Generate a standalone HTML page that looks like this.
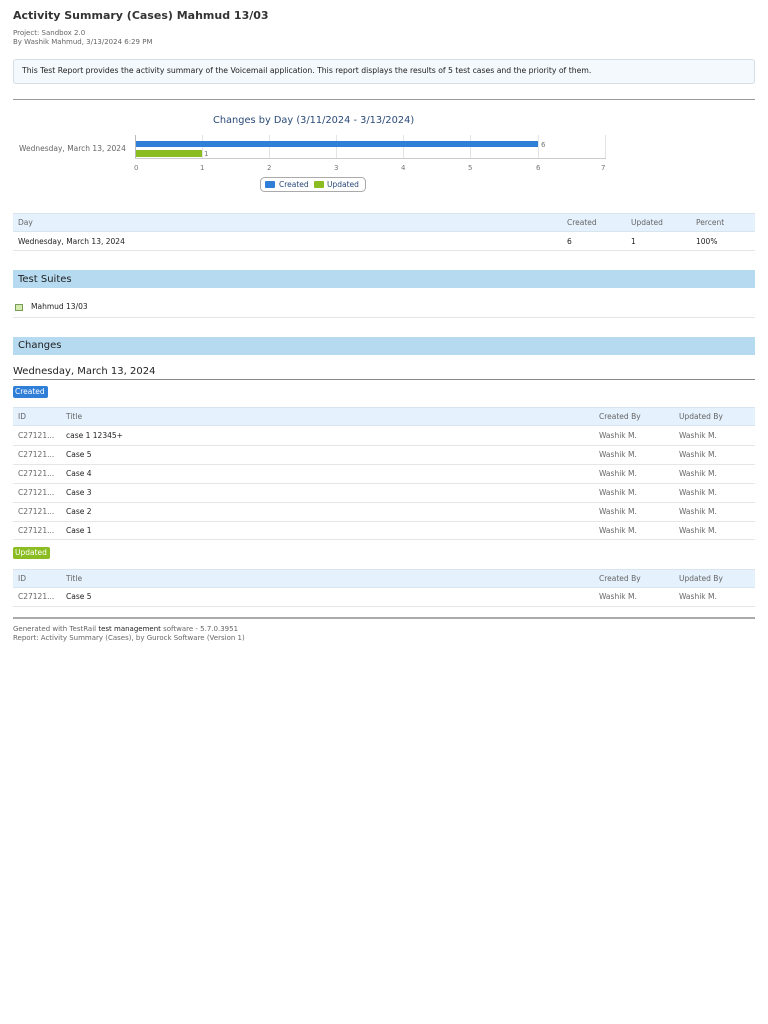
<!DOCTYPE html>
<html><head><meta charset="utf-8"><style>
*{margin:0;padding:0;box-sizing:border-box}
body{width:768px;height:1024px;background:#fff;position:relative;font-family:"DejaVu Sans","Liberation Sans",sans-serif;color:#222;overflow:hidden}
.a{position:absolute;white-space:nowrap;line-height:1}
.s{font-size:7.5px;margin-top:1px}
.g{color:#666}
.hd{position:absolute;left:13px;width:742px;background:#e5f1fc;border-top:1px solid #d8e4ee;border-bottom:1px solid #d8e4ee}
.ln{position:absolute;left:13px;width:742px;height:1px;background:#e6e6e6}
.bar{position:absolute;left:13px;width:742px;height:18px;background:#b6daf0}
</style></head><body>
<div class="a" style="left:13px;top:10px;font-size:11px;font-weight:bold;color:#333">Activity Summary (Cases) Mahmud 13/03</div>
<div class="a g" style="left:13px;top:30px;font-size:7px">Project: Sandbox 2.0</div>
<div class="a g" style="left:13px;top:39px;font-size:7px">By Washik Mahmud, 3/13/2024 6:29 PM</div>
<div style="position:absolute;left:13px;top:59px;width:742px;height:25px;background:#f4f9fd;border:1px solid #d6dee5;border-radius:3px"></div>
<div class="a" style="left:22px;top:67px;font-size:7.7px">This Test Report provides the activity summary of the Voicemail application. This report displays the results of 5 test cases and the priority of them.</div>
<div style="position:absolute;left:13px;top:99px;width:742px;height:1px;background:#999"></div>
<div class="a" style="left:213px;top:116px;font-size:9.8px;color:#2a4a78">Changes by Day (3/11/2024 - 3/13/2024)</div>
<div class="a s g" style="left:19px;top:144px">Wednesday, March 13, 2024</div>
<svg style="position:absolute;left:0;top:0" width="768" height="200">
<g stroke="#e4e4e4" stroke-width="1">
<line x1="202.5" y1="135" x2="202.5" y2="159"/><line x1="269.5" y1="135" x2="269.5" y2="159"/><line x1="336.5" y1="135" x2="336.5" y2="159"/><line x1="403.5" y1="135" x2="403.5" y2="159"/><line x1="470.5" y1="135" x2="470.5" y2="159"/><line x1="538.5" y1="135" x2="538.5" y2="159"/><line x1="605.5" y1="135" x2="605.5" y2="159"/>
</g>
<line x1="135.5" y1="135" x2="135.5" y2="159" stroke="#bbb"/>
<line x1="135" y1="158.5" x2="606" y2="158.5" stroke="#ccc"/>
<rect x="136" y="141" width="402" height="6" fill="#2f7ed8"/>
<rect x="136" y="150" width="66" height="7" fill="#8bbc21"/>
<g font-size="7" fill="#777" font-family="DejaVu Sans,sans-serif">
<text x="541" y="147">6</text><text x="204" y="156">1</text>
<text x="134" y="170">0</text><text x="200" y="170">1</text><text x="267" y="170">2</text><text x="334" y="170">3</text><text x="401" y="170">4</text><text x="468" y="170">5</text><text x="536" y="170">6</text><text x="601" y="170">7</text>
</g>
<rect x="260.5" y="177.5" width="105" height="14" rx="4" fill="#fff" stroke="#aaa"/>
<rect x="265" y="181" width="10" height="7" rx="1" fill="#2f7ed8"/>
<rect x="314" y="181" width="10" height="7" rx="1" fill="#8bbc21"/>
<g font-size="7.5" fill="#2a4a78" font-family="DejaVu Sans,sans-serif"><text x="279" y="187">Created</text><text x="327" y="187">Updated</text></g>
</svg>

<div class="hd" style="top:213px;height:19px"></div>
<div class="a s g" style="left:18px;top:218px">Day</div>
<div class="a s g" style="left:567px;top:218px">Created</div>
<div class="a s g" style="left:631px;top:218px">Updated</div>
<div class="a s g" style="left:696px;top:218px">Percent</div>
<div class="a s" style="left:18px;top:237px">Wednesday, March 13, 2024</div>
<div class="a s" style="left:567px;top:237px">6</div>
<div class="a s" style="left:631px;top:237px">1</div>
<div class="a s" style="left:696px;top:237px">100%</div>
<div class="ln" style="top:250px"></div>

<div class="bar" style="top:270px"></div>
<div class="a" style="left:18px;top:275px;font-size:10px;color:#222">Test Suites</div>
<div style="position:absolute;left:15px;top:304px;width:8px;height:7px;background:#d4ecb0;border:1px solid #7a9a5a"></div>
<div class="a s" style="left:31px;top:302px">Mahmud 13/03</div>
<div class="ln" style="top:317px"></div>

<div class="bar" style="top:337px"></div>
<div class="a" style="left:18px;top:341px;font-size:10px;color:#222">Changes</div>
<div class="a" style="left:13px;top:367px;font-size:10px;color:#222">Wednesday, March 13, 2024</div>
<div style="position:absolute;left:13px;top:379px;width:742px;height:1px;background:#888"></div>
<div class="a" style="left:13px;top:386px;width:35px;height:12px;background:#2f7ed8;color:#fff;font-size:7.5px;padding:2px 2px;border-radius:2px">Created</div>

<div class="hd" style="top:407px;height:19px"></div>
<div class="a s g" style="left:18px;top:412px">ID</div>
<div class="a s g" style="left:66px;top:412px">Title</div>
<div class="a s g" style="left:599px;top:412px">Created By</div>
<div class="a s g" style="left:679px;top:412px">Updated By</div>

<div class="a s g" style="left:18px;top:431px">C27121...</div><div class="a s" style="left:66px;top:431px">case 1 12345+</div><div class="a s g" style="left:599px;top:431px">Washik M.</div><div class="a s g" style="left:679px;top:431px">Washik M.</div><div class="ln" style="top:445px"></div>
<div class="a s g" style="left:18px;top:450px">C27121...</div><div class="a s" style="left:66px;top:450px">Case 5</div><div class="a s g" style="left:599px;top:450px">Washik M.</div><div class="a s g" style="left:679px;top:450px">Washik M.</div><div class="ln" style="top:464px"></div>
<div class="a s g" style="left:18px;top:469px">C27121...</div><div class="a s" style="left:66px;top:469px">Case 4</div><div class="a s g" style="left:599px;top:469px">Washik M.</div><div class="a s g" style="left:679px;top:469px">Washik M.</div><div class="ln" style="top:483px"></div>
<div class="a s g" style="left:18px;top:488px">C27121...</div><div class="a s" style="left:66px;top:488px">Case 3</div><div class="a s g" style="left:599px;top:488px">Washik M.</div><div class="a s g" style="left:679px;top:488px">Washik M.</div><div class="ln" style="top:502px"></div>
<div class="a s g" style="left:18px;top:507px">C27121...</div><div class="a s" style="left:66px;top:507px">Case 2</div><div class="a s g" style="left:599px;top:507px">Washik M.</div><div class="a s g" style="left:679px;top:507px">Washik M.</div><div class="ln" style="top:521px"></div>
<div class="a s g" style="left:18px;top:526px">C27121...</div><div class="a s" style="left:66px;top:526px">Case 1</div><div class="a s g" style="left:599px;top:526px">Washik M.</div><div class="a s g" style="left:679px;top:526px">Washik M.</div><div class="ln" style="top:539px"></div>

<div class="a" style="left:13px;top:547px;width:37px;height:12px;background:#8bbc21;color:#fff;font-size:7.5px;padding:2px 2px;border-radius:2px">Updated</div>
<div class="hd" style="top:569px;height:19px"></div>
<div class="a s g" style="left:18px;top:574px">ID</div>
<div class="a s g" style="left:66px;top:574px">Title</div>
<div class="a s g" style="left:599px;top:574px">Created By</div>
<div class="a s g" style="left:679px;top:574px">Updated By</div>
<div class="a s g" style="left:18px;top:592px">C27121...</div><div class="a s" style="left:66px;top:592px">Case 5</div><div class="a s g" style="left:599px;top:592px">Washik M.</div><div class="a s g" style="left:679px;top:592px">Washik M.</div><div class="ln" style="top:606px"></div>

<div style="position:absolute;left:13px;top:617px;width:742px;height:2px;background:#aaa"></div>
<div class="a g" style="left:13px;top:626px;font-size:7px">Generated with TestRail <span style="color:#222">test management</span> software - 5.7.0.3951</div>
<div class="a g" style="left:13px;top:635px;font-size:7px">Report: Activity Summary (Cases), by Gurock Software (Version 1)</div>
</body></html>
